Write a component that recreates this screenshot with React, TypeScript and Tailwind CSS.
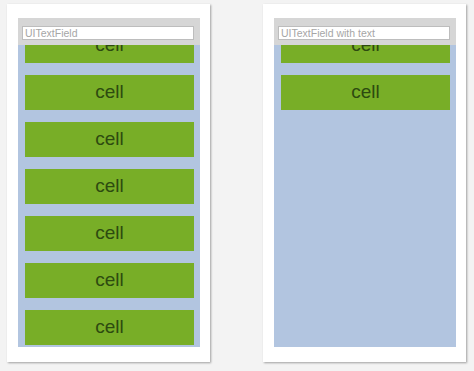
const leftCells = 7;
const rightCells = 2;

function Phone({ label, cells }: { label: string; cells: number }) {
  return (
    <div className="w-[203px] h-[358px] bg-white flex flex-col pt-[14px] pl-[11px] pr-[10px] pb-[15px] shadow-[1px_1px_2px_rgba(0,0,0,0.35)]">
      {/* Table view, scrolled under the search header */}
      <div className="relative flex-1 overflow-hidden bg-[#b2c5e0]">
        <div className="flex flex-col gap-[12px] pt-[10px] pl-[7px] pr-[6px]">
          {Array.from({ length: cells }).map((_, i) => (
            <div
              key={i}
              className="h-[35px] shrink-0 bg-[#78ae27] flex items-center justify-center text-[19px] text-[#2d4a10] font-['Liberation_Sans',Arial,sans-serif]"
            >
              cell
            </div>
          ))}
        </div>

        {/* Header with text field */}
        <div className="absolute top-0 left-0 right-0 h-[27px] bg-[#d6d6d6] pt-[8px] pl-[4px] pr-[6px]">
          <div className="h-[14px] bg-white border border-[#bdbdbd] flex items-center pl-[2px] text-[10.5px] leading-none text-[#a6a6a6] font-['Liberation_Sans',Arial,sans-serif]">
            {label}
          </div>
        </div>
      </div>
    </div>
  );
}

export default function App() {
  return (
    <div className="w-[474px] h-[371px] bg-[#f3f3f3] flex items-start gap-[53px] pl-[7px] pt-[4px]">
      <Phone label="UITextField" cells={leftCells} />
      <Phone label="UITextField with text" cells={rightCells} />
    </div>
  );
}
